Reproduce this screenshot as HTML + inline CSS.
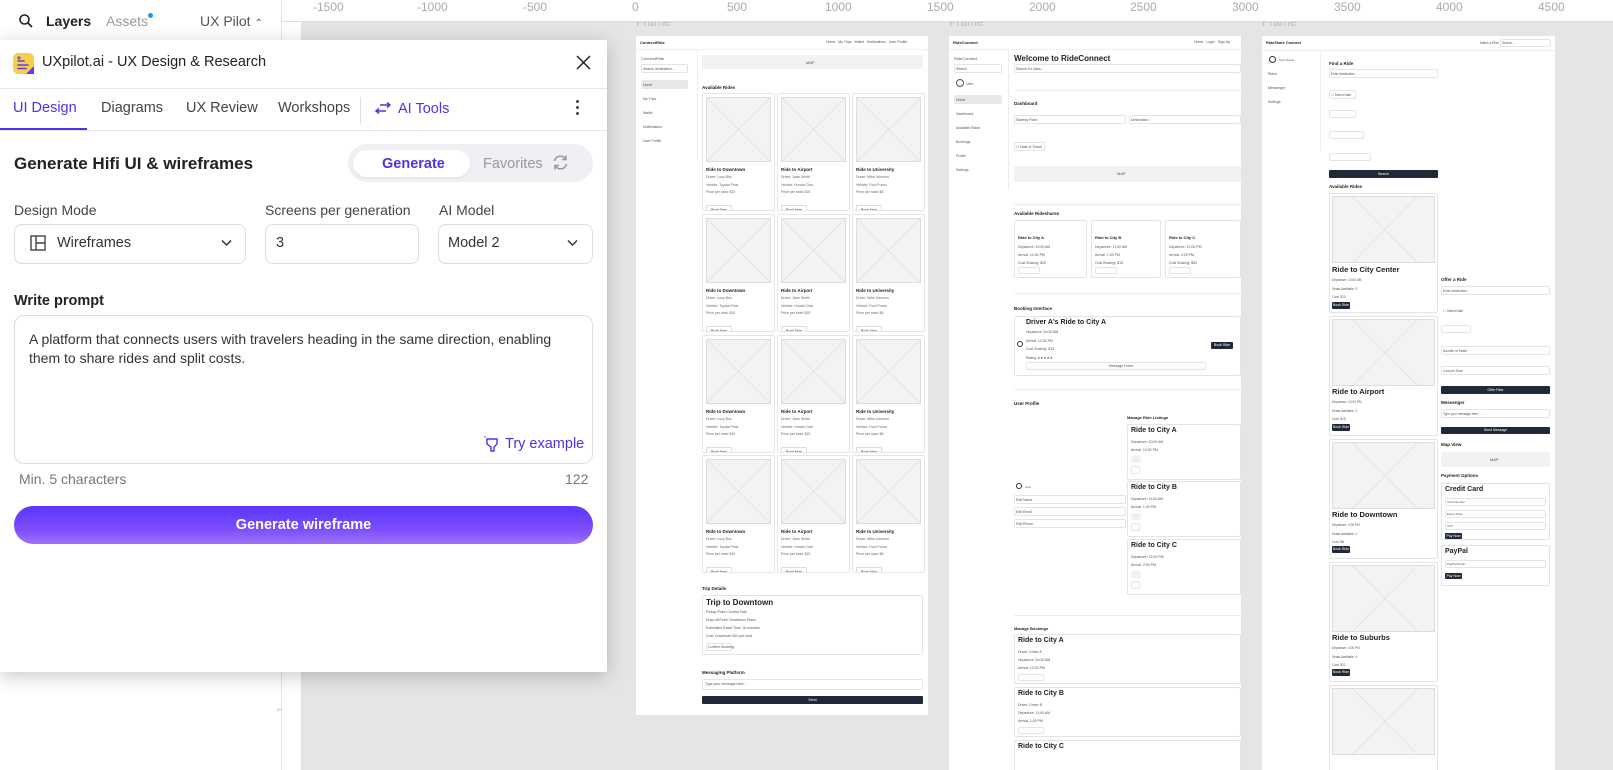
<!DOCTYPE html>
<html><head><meta charset="utf-8"><style>
*{box-sizing:border-box;margin:0;padding:0}
body{width:1613px;height:770px;overflow:hidden;position:relative;background:#e5e5e5;font-family:"Liberation Sans",sans-serif;color:#222}
.a{position:absolute}
.rl{position:absolute;top:0;font-size:12px;color:#aaa}
.fr{position:absolute;background:#fff;overflow:hidden}
.t{position:absolute;font-size:4px;color:#555;white-space:nowrap}
.h{position:absolute;font-size:5px;font-weight:bold;color:#222;white-space:nowrap}
.bx{position:absolute;border:1px solid #e4e4e4;border-radius:2px;background:#fff}
.gr{position:absolute;background:#f1f2f4;border-radius:2px}
.card{position:absolute;width:73px;height:118px;border:1px solid #e6e6e6;border-radius:2px;padding:3px;background:#fff;overflow:hidden}
.card svg{display:block;width:65px;height:65px;background:#f2f3f5;border:1px solid #ddd}
.card b{display:block;font-size:4.5px;margin:5px 0 3px;color:#222}
.card i{display:block;font-style:normal;font-size:3.5px;color:#666;margin-bottom:3.5px}
.card u{display:inline-block;text-decoration:none;font-size:3.5px;border:1px solid #ddd;padding:1.5px 4px;border-radius:1px}
.dk{position:absolute;background:#1f2937;color:#fff;font-size:3.5px;text-align:center;border-radius:1px}
.lab{font-size:14px;color:#444;position:absolute}
.inp{position:absolute;border:1px solid #ddd;border-radius:8px;height:40px;background:#fff}
.fl{position:absolute;top:15px;font-size:12px;color:#bbb}
</style></head><body>

<!-- frame labels (under ruler) -->
<div class="fl" style="left:636px">Frame</div>
<div class="fl" style="left:949px">Frame</div>
<div class="fl" style="left:1262px">Frame</div>

<!-- left sidebar top -->
<div class="a" style="left:0;top:0;width:282px;height:770px;background:#fff;border-right:1px solid #e5e5e5"></div>
<div class="a" style="left:282px;top:22px;width:20px;height:748px;background:#fff;border-right:1px solid #e0e0e0"></div>
<div class="a" style="left:282px;top:0;width:1331px;height:22px;background:#fff;border-bottom:1px solid #ddd"></div>
<div class="rl" style="left:313px">-1500</div><div class="rl" style="left:417px">-1000</div><div class="rl" style="left:523px">-500</div>
<div class="rl" style="left:632px">0</div><div class="rl" style="left:727px">500</div><div class="rl" style="left:825px">1000</div>
<div class="rl" style="left:927px">1500</div><div class="rl" style="left:1029px">2000</div><div class="rl" style="left:1130px">2500</div>
<div class="rl" style="left:1232px">3000</div><div class="rl" style="left:1334px">3500</div><div class="rl" style="left:1436px">4000</div><div class="rl" style="left:1538px">4500</div>
<div class="a" style="left:277px;top:705px;font-size:8px;color:#aaa">⌐</div>
<svg class="a" style="left:18px;top:13px" width="16" height="16" viewBox="0 0 16 16"><circle cx="6.5" cy="6.5" r="4.5" fill="none" stroke="#222" stroke-width="1.6"/><path d="M10 10l4 4" stroke="#222" stroke-width="1.6"/></svg>
<div class="a" style="left:46px;top:13px;font-size:14px;font-weight:bold;color:#222">Layers</div>
<div class="a" style="left:106px;top:13px;font-size:14px;color:#999">Assets</div>
<div class="a" style="left:148px;top:13px;width:5px;height:5px;border-radius:50%;background:#1e90ff"></div>
<div class="a" style="left:200px;top:13px;font-size:14px;color:#555">UX Pilot <span style="font-size:10px">⌃</span></div>

<!-- FRAME 1 -->
<div class="fr" style="left:636px;top:36px;width:292px;height:679px">
 <div class="h" style="left:4px;top:4px;font-size:4px">ConnectRide</div>
 <div class="t" style="left:190px;top:4px;font-size:3.5px">Home &nbsp; My Trips &nbsp; Wallet &nbsp; Notifications &nbsp; User Profile</div>
 <div class="a" style="left:0;top:13px;width:292px;border-top:1px solid #eee"></div>
 <div class="a" style="left:61px;top:14px;height:110px;border-left:1px solid #eee"></div>
 <div class="t" style="left:5px;top:20px">ConnectRide</div>
 <div class="bx" style="left:5px;top:28px;width:47px;height:9px"></div><div class="t" style="left:7px;top:31px;font-size:3.5px">Search destination...</div>
 <div class="gr" style="left:5px;top:44px;width:47px;height:9px;background:#e8e8ea"></div><div class="t" style="left:7px;top:47px;font-size:3.5px">Home</div>
 <div class="t" style="left:7px;top:61px;font-size:3.5px">My Trips</div><div class="t" style="left:7px;top:75px;font-size:3.5px">Wallet</div>
 <div class="t" style="left:7px;top:89px;font-size:3.5px">Notifications</div><div class="t" style="left:7px;top:103px;font-size:3.5px">User Profile</div>
 <div class="gr" style="left:66px;top:19px;width:221px;height:14px"></div><div class="t" style="left:170px;top:24px">MAP</div>
 <div class="h" style="left:66px;top:49px;font-size:4.5px">Available Rides</div>
</div>
<div class="card" style="left:702px;top:93px"><svg viewBox="0 0 65 65"><path d="M0 0L65 65M65 0L0 65" stroke="#ccc" stroke-width=".5"/></svg><b>Ride to Downtown</b><i>Driver: Lucy Bux</i><i>Vehicle: Toyota Prius</i><i>Price per seat: $10</i><u>Book Now</u></div>
<div class="card" style="left:777px;top:93px"><svg viewBox="0 0 65 65"><path d="M0 0L65 65M65 0L0 65" stroke="#ccc" stroke-width=".5"/></svg><b>Ride to Airport</b><i>Driver: Jane Smith</i><i>Vehicle: Honda Civic</i><i>Price per seat: $15</i><u>Book Now</u></div>
<div class="card" style="left:852px;top:93px"><svg viewBox="0 0 65 65"><path d="M0 0L65 65M65 0L0 65" stroke="#ccc" stroke-width=".5"/></svg><b>Ride to University</b><i>Driver: Mike Johnson</i><i>Vehicle: Ford Focus</i><i>Price per seat: $8</i><u>Book Now</u></div>
<div class="card" style="left:702px;top:214px"><svg viewBox="0 0 65 65"><path d="M0 0L65 65M65 0L0 65" stroke="#ccc" stroke-width=".5"/></svg><b>Ride to Downtown</b><i>Driver: Lucy Bux</i><i>Vehicle: Toyota Prius</i><i>Price per seat: $10</i><u>Book Now</u></div>
<div class="card" style="left:777px;top:214px"><svg viewBox="0 0 65 65"><path d="M0 0L65 65M65 0L0 65" stroke="#ccc" stroke-width=".5"/></svg><b>Ride to Airport</b><i>Driver: Jane Smith</i><i>Vehicle: Honda Civic</i><i>Price per seat: $15</i><u>Book Now</u></div>
<div class="card" style="left:852px;top:214px"><svg viewBox="0 0 65 65"><path d="M0 0L65 65M65 0L0 65" stroke="#ccc" stroke-width=".5"/></svg><b>Ride to University</b><i>Driver: Mike Johnson</i><i>Vehicle: Ford Focus</i><i>Price per seat: $8</i><u>Book Now</u></div>
<div class="card" style="left:702px;top:335px"><svg viewBox="0 0 65 65"><path d="M0 0L65 65M65 0L0 65" stroke="#ccc" stroke-width=".5"/></svg><b>Ride to Downtown</b><i>Driver: Lucy Bux</i><i>Vehicle: Toyota Prius</i><i>Price per seat: $10</i><u>Book Now</u></div>
<div class="card" style="left:777px;top:335px"><svg viewBox="0 0 65 65"><path d="M0 0L65 65M65 0L0 65" stroke="#ccc" stroke-width=".5"/></svg><b>Ride to Airport</b><i>Driver: Jane Smith</i><i>Vehicle: Honda Civic</i><i>Price per seat: $15</i><u>Book Now</u></div>
<div class="card" style="left:852px;top:335px"><svg viewBox="0 0 65 65"><path d="M0 0L65 65M65 0L0 65" stroke="#ccc" stroke-width=".5"/></svg><b>Ride to University</b><i>Driver: Mike Johnson</i><i>Vehicle: Ford Focus</i><i>Price per seat: $8</i><u>Book Now</u></div>
<div class="card" style="left:702px;top:455px"><svg viewBox="0 0 65 65"><path d="M0 0L65 65M65 0L0 65" stroke="#ccc" stroke-width=".5"/></svg><b>Ride to Downtown</b><i>Driver: Lucy Bux</i><i>Vehicle: Toyota Prius</i><i>Price per seat: $10</i><u>Book Now</u></div>
<div class="card" style="left:777px;top:455px"><svg viewBox="0 0 65 65"><path d="M0 0L65 65M65 0L0 65" stroke="#ccc" stroke-width=".5"/></svg><b>Ride to Airport</b><i>Driver: Jane Smith</i><i>Vehicle: Honda Civic</i><i>Price per seat: $15</i><u>Book Now</u></div>
<div class="card" style="left:852px;top:455px"><svg viewBox="0 0 65 65"><path d="M0 0L65 65M65 0L0 65" stroke="#ccc" stroke-width=".5"/></svg><b>Ride to University</b><i>Driver: Mike Johnson</i><i>Vehicle: Ford Focus</i><i>Price per seat: $8</i><u>Book Now</u></div>
<div class="h" style="left:702px;top:586px;font-size:4.5px">Trip Details</div>
<div class="bx" style="left:702px;top:595px;width:221px;height:60px"></div>
<div class="h" style="left:706px;top:598px;font-size:8px">Trip to Downtown</div>
<div class="t" style="left:706px;top:610px;font-size:3.5px">Pickup Point: Central Park</div>
<div class="t" style="left:706px;top:618px;font-size:3.5px">Drop-off Point: Downtown Plaza</div>
<div class="t" style="left:706px;top:626px;font-size:3.5px">Estimated Travel Time: 30 minutes</div>
<div class="t" style="left:706px;top:634px;font-size:3.5px">Cost: Downtown $10 per seat</div>
<div class="bx" style="left:706px;top:643px;width:26px;height:8px"></div><div class="t" style="left:708px;top:645px;font-size:3.5px">Confirm Booking</div>
<div class="h" style="left:702px;top:670px;font-size:4.5px">Messaging Platform</div>
<div class="bx" style="left:702px;top:679px;width:221px;height:11px"></div><div class="t" style="left:705px;top:682px;font-size:3.5px">Type your message here...</div>
<div class="dk" style="left:702px;top:696px;width:221px;height:8px;line-height:8px">Send</div>

<!-- FRAME 2 -->
<div class="fr" style="left:949px;top:36px;width:292px;height:734px">
 <div class="h" style="left:4px;top:4px;font-size:4px">RideConnect</div>
 <div class="t" style="left:245px;top:4px;font-size:3.5px">Home &nbsp; Login &nbsp; Sign Up</div>
 <div class="a" style="left:0;top:13px;width:292px;border-top:1px solid #eee"></div>
 <div class="a" style="left:59px;top:14px;height:140px;border-left:1px solid #eee"></div>
 <div class="t" style="left:5px;top:20px">RideConnect</div>
 <div class="bx" style="left:5px;top:28px;width:48px;height:9px"></div><div class="t" style="left:7px;top:31px;font-size:3.5px">Search</div>
 <div class="a" style="left:7px;top:43px;width:8px;height:8px;border:1px solid #555;border-radius:50%"></div><div class="t" style="left:17px;top:46px;font-size:3.5px">User</div>
 <div class="gr" style="left:5px;top:59px;width:48px;height:9px;background:#e8e8ea"></div><div class="t" style="left:7px;top:62px;font-size:3.5px">Home</div>
 <div class="t" style="left:7px;top:76px;font-size:3.5px">Dashboard</div><div class="t" style="left:7px;top:90px;font-size:3.5px">Available Rides</div>
 <div class="t" style="left:7px;top:104px;font-size:3.5px">Bookings</div><div class="t" style="left:7px;top:118px;font-size:3.5px">Profile</div><div class="t" style="left:7px;top:132px;font-size:3.5px">Settings</div>
 <div class="h" style="left:65px;top:18px;font-size:8px">Welcome to RideConnect</div>
 <div class="bx" style="left:65px;top:28px;width:227px;height:9px"></div><div class="t" style="left:67px;top:31px;font-size:3.5px">Search for rides...</div>
 <div class="a" style="left:65px;top:54px;width:227px;border-top:1px solid #eee"></div>
 <div class="h" style="left:65px;top:65px;font-size:4.5px">Dashboard</div>
 <div class="bx" style="left:65px;top:79px;width:112px;height:9px"></div><div class="t" style="left:67px;top:82px;font-size:3.5px">Starting Point</div>
 <div class="bx" style="left:180px;top:79px;width:112px;height:9px"></div><div class="t" style="left:182px;top:82px;font-size:3.5px">Destination</div>
 <div class="bx" style="left:65px;top:106px;width:31px;height:9px"></div><div class="t" style="left:67px;top:109px;font-size:3.5px">☐ Date of Travel</div>
 <div class="gr" style="left:65px;top:130px;width:227px;height:16px"></div><div class="t" style="left:168px;top:135px">MAP</div>
 <div class="a" style="left:65px;top:168px;width:227px;border-top:1px solid #eee"></div>
 <div class="h" style="left:65px;top:175px;font-size:4.5px">Available Rideshares</div>
 <div class="bx" style="left:65px;top:184px;width:73px;height:58px"></div><div class="bx" style="left:142px;top:184px;width:70px;height:58px"></div><div class="bx" style="left:216px;top:184px;width:76px;height:58px"></div>
 <div class="h" style="left:69px;top:199px;font-size:4px">Ride to City A</div><div class="h" style="left:146px;top:199px;font-size:4px">Ride to City B</div><div class="h" style="left:220px;top:199px;font-size:4px">Ride to City C</div>
 <div class="t" style="left:69px;top:207px;font-size:3.5px;line-height:8px">Departure: 10:00 AM<br>Arrival: 12:00 PM<br>Cost Sharing: $20</div>
 <div class="t" style="left:146px;top:207px;font-size:3.5px;line-height:8px">Departure: 11:00 AM<br>Arrival: 1:00 PM<br>Cost Sharing: $15</div>
 <div class="t" style="left:220px;top:207px;font-size:3.5px;line-height:8px">Departure: 12:00 PM<br>Arrival: 2:00 PM<br>Cost Sharing: $30</div>
 <div class="bx" style="left:69px;top:231px;width:22px;height:7px"></div><div class="bx" style="left:146px;top:231px;width:22px;height:7px"></div><div class="bx" style="left:220px;top:231px;width:22px;height:7px"></div>
 <div class="a" style="left:65px;top:257px;width:227px;border-top:1px solid #eee"></div>
 <div class="h" style="left:65px;top:270px;font-size:4.5px">Booking Interface</div>
 <div class="bx" style="left:65px;top:280px;width:227px;height:60px"></div>
 <div class="h" style="left:77px;top:283px;font-size:7px">Driver A's Ride to City A</div>
 <div class="t" style="left:77px;top:292px;font-size:3.5px;line-height:8.5px">Departure: 10:00 AM<br>Arrival: 12:00 PM<br>Cost Sharing: $15<br>Rating ★★★★★</div>
 <div class="a" style="left:68px;top:305px;width:6px;height:6px;border:1px solid #333;border-radius:50%"></div>
 <div class="bx" style="left:77px;top:326px;width:180px;height:8px"></div><div class="t" style="left:160px;top:328px;font-size:3.5px">Message Driver</div>
 <div class="dk" style="left:262px;top:306px;width:22px;height:7px;line-height:7px">Book Ride</div>
 <div class="a" style="left:65px;top:353px;width:227px;border-top:1px solid #eee"></div>
 <div class="h" style="left:65px;top:365px;font-size:4.5px">User Profile</div>
 <div class="h" style="left:178px;top:379px;font-size:4px">Manage Ride Listings</div>
 <div class="bx" style="left:178px;top:388px;width:114px;height:56px"></div><div class="h" style="left:182px;top:391px;font-size:7px">Ride to City A</div>
 <div class="bx" style="left:178px;top:445px;width:114px;height:56px"></div><div class="h" style="left:182px;top:448px;font-size:7px">Ride to City B</div>
 <div class="bx" style="left:178px;top:503px;width:114px;height:56px"></div><div class="h" style="left:182px;top:506px;font-size:7px">Ride to City C</div>
 <div class="t" style="left:182px;top:402px;font-size:3.5px;line-height:8px">Departure: 10:00 AM<br>Arrival: 12:00 PM</div>
 <div class="t" style="left:182px;top:459px;font-size:3.5px;line-height:8px">Departure: 11:00 AM<br>Arrival: 1:00 PM</div>
 <div class="t" style="left:182px;top:517px;font-size:3.5px;line-height:8px">Departure: 12:00 PM<br>Arrival: 2:00 PM</div>
 <div class="gr" style="left:182px;top:420px;width:10px;height:7px"></div><div class="bx" style="left:182px;top:430px;width:9px;height:8px"></div>
 <div class="gr" style="left:182px;top:477px;width:10px;height:7px"></div><div class="bx" style="left:182px;top:487px;width:9px;height:8px"></div>
 <div class="gr" style="left:182px;top:535px;width:10px;height:7px"></div><div class="bx" style="left:182px;top:545px;width:9px;height:8px"></div>
 <div class="a" style="left:67px;top:447px;width:6px;height:6px;border:1px solid #333;border-radius:50%"></div><div class="t" style="left:76px;top:449px;font-size:3px">User</div>
 <div class="bx" style="left:65px;top:459px;width:112px;height:9px"></div><div class="t" style="left:67px;top:462px;font-size:3.5px">Edit Name</div>
 <div class="bx" style="left:65px;top:471px;width:112px;height:9px"></div><div class="t" style="left:67px;top:474px;font-size:3.5px">Edit Email</div>
 <div class="bx" style="left:65px;top:483px;width:112px;height:9px"></div><div class="t" style="left:67px;top:486px;font-size:3.5px">Edit Phone</div>
 <div class="a" style="left:65px;top:579px;width:227px;border-top:1px solid #eee"></div>
 <div class="h" style="left:65px;top:590px;font-size:4px">Manage Bookings</div>
 <div class="bx" style="left:65px;top:598px;width:227px;height:50px"></div><div class="h" style="left:69px;top:601px;font-size:7px">Ride to City A</div>
 <div class="t" style="left:69px;top:612px;font-size:3.5px;line-height:8px">Driver: Driver A<br>Departure: 10:00 AM<br>Arrival: 12:00 PM</div>
 <div class="bx" style="left:69px;top:638px;width:26px;height:7px"></div>
 <div class="bx" style="left:65px;top:651px;width:227px;height:50px"></div><div class="h" style="left:69px;top:654px;font-size:7px">Ride to City B</div>
 <div class="t" style="left:69px;top:665px;font-size:3.5px;line-height:8px">Driver: Driver B<br>Departure: 11:00 AM<br>Arrival: 1:00 PM</div>
 <div class="bx" style="left:69px;top:691px;width:26px;height:7px"></div>
 <div class="bx" style="left:65px;top:704px;width:227px;height:50px"></div><div class="h" style="left:69px;top:707px;font-size:7px">Ride to City C</div>
</div>

<!-- FRAME 3 -->
<div class="fr" style="left:1262px;top:36px;width:293px;height:734px">
 <div class="h" style="left:4px;top:5px;font-size:3.8px">RideShare Connect</div>
 <div class="t" style="left:218px;top:5px;font-size:3.2px">Match a Ride</div>
 <div class="bx" style="left:238px;top:3px;width:51px;height:8px"></div><div class="t" style="left:240px;top:5px;font-size:3.2px">Search...</div>
 <div class="a" style="left:0;top:14px;width:293px;border-top:1px solid #eee"></div>
 <div class="a" style="left:58px;top:15px;height:100px;border-left:1px solid #eee"></div>
 <div class="a" style="left:7px;top:20px;width:7px;height:7px;border:1px solid #333;border-radius:50%"></div><div class="t" style="left:17px;top:22px;font-size:3px">User Name</div>
 <div class="t" style="left:6px;top:36px;font-size:3.5px">Rides</div><div class="t" style="left:6px;top:50px;font-size:3.5px">Messenger</div><div class="t" style="left:6px;top:64px;font-size:3.5px">Settings</div>
 <div class="h" style="left:67px;top:25px;font-size:4.5px">Find a Ride</div>
 <div class="bx" style="left:67px;top:33px;width:109px;height:9px"></div><div class="t" style="left:69px;top:36px;font-size:3.2px">Enter destination</div>
 <div class="bx" style="left:67px;top:54px;width:27px;height:9px"></div><div class="t" style="left:69px;top:57px;font-size:3.2px">☐ Select Date</div>
 <div class="bx" style="left:67px;top:74px;width:27px;height:8px"></div><div class="bx" style="left:67px;top:95px;width:35px;height:8px"></div><div class="bx" style="left:67px;top:117px;width:42px;height:8px"></div>
 <div class="dk" style="left:67px;top:134px;width:109px;height:8px;line-height:8px">Search</div>
 <div class="h" style="left:67px;top:148px;font-size:4.5px">Available Rides</div>
 <div class="bx" style="left:67px;top:157px;width:109px;height:120px"></div>
 <svg class="a" style="left:70px;top:160px" width="103" height="67" viewBox="0 0 103 67"><rect x=".5" y=".5" width="102" height="66" fill="#f2f3f5" stroke="#ddd"/><path d="M20 0L86 67M86 0L20 67" stroke="#ccc" stroke-width=".5"/></svg>
 <div class="h" style="left:70px;top:229px;font-size:7.5px">Ride to City Center</div>
 <div class="t" style="left:70px;top:240px;font-size:3.2px;line-height:8.5px">Departure: 10:00 AM<br>Seats Available: 3<br>Cost: $10</div>
 <div class="dk" style="left:70px;top:266px;width:18px;height:7px;line-height:7px">Book Ride</div>
 <div class="bx" style="left:67px;top:280px;width:109px;height:120px"></div>
 <svg class="a" style="left:70px;top:283px" width="103" height="67" viewBox="0 0 103 67"><rect x=".5" y=".5" width="102" height="66" fill="#f2f3f5" stroke="#ddd"/><path d="M20 0L86 67M86 0L20 67" stroke="#ccc" stroke-width=".5"/></svg>
 <div class="h" style="left:70px;top:351px;font-size:7.5px">Ride to Airport</div>
 <div class="t" style="left:70px;top:362px;font-size:3.2px;line-height:8.5px">Departure: 12:00 PM<br>Seats Available: 2<br>Cost: $15</div>
 <div class="dk" style="left:70px;top:388px;width:18px;height:7px;line-height:7px">Book Ride</div>
 <div class="bx" style="left:67px;top:403px;width:109px;height:120px"></div>
 <svg class="a" style="left:70px;top:406px" width="103" height="67" viewBox="0 0 103 67"><rect x=".5" y=".5" width="102" height="66" fill="#f2f3f5" stroke="#ddd"/><path d="M20 0L86 67M86 0L20 67" stroke="#ccc" stroke-width=".5"/></svg>
 <div class="h" style="left:70px;top:474px;font-size:7.5px">Ride to Downtown</div>
 <div class="t" style="left:70px;top:485px;font-size:3.2px;line-height:8.5px">Departure: 2:00 PM<br>Seats Available: 1<br>Cost: $8</div>
 <div class="dk" style="left:70px;top:510px;width:18px;height:7px;line-height:7px">Book Ride</div>
 <div class="bx" style="left:67px;top:526px;width:109px;height:120px"></div>
 <svg class="a" style="left:70px;top:529px" width="103" height="67" viewBox="0 0 103 67"><rect x=".5" y=".5" width="102" height="66" fill="#f2f3f5" stroke="#ddd"/><path d="M20 0L86 67M86 0L20 67" stroke="#ccc" stroke-width=".5"/></svg>
 <div class="h" style="left:70px;top:597px;font-size:7.5px">Ride to Suburbs</div>
 <div class="t" style="left:70px;top:608px;font-size:3.2px;line-height:8.5px">Departure: 4:00 PM<br>Seats Available: 4<br>Cost: $12</div>
 <div class="dk" style="left:70px;top:633px;width:18px;height:7px;line-height:7px">Book Ride</div>
 <div class="bx" style="left:67px;top:649px;width:109px;height:120px"></div>
 <svg class="a" style="left:70px;top:652px" width="103" height="67" viewBox="0 0 103 67"><rect x=".5" y=".5" width="102" height="66" fill="#f2f3f5" stroke="#ddd"/><path d="M20 0L86 67M86 0L20 67" stroke="#ccc" stroke-width=".5"/></svg>
 <div class="h" style="left:179px;top:241px;font-size:4.5px">Offer a Ride</div>
 <div class="bx" style="left:179px;top:250px;width:109px;height:9px"></div><div class="t" style="left:181px;top:253px;font-size:3.2px">Enter destination</div>
 <div class="t" style="left:181px;top:273px;font-size:3.2px">☐ Select Date</div>
 <div class="bx" style="left:179px;top:289px;width:30px;height:8px"></div>
 <div class="bx" style="left:179px;top:310px;width:109px;height:9px"></div><div class="t" style="left:181px;top:313px;font-size:3.2px">Number of Seats</div>
 <div class="bx" style="left:179px;top:330px;width:109px;height:9px"></div><div class="t" style="left:181px;top:333px;font-size:3.2px">Cost per Seat</div>
 <div class="dk" style="left:179px;top:350px;width:109px;height:8px;line-height:8px">Offer Ride</div>
 <div class="h" style="left:179px;top:364px;font-size:4.5px">Messenger</div>
 <div class="bx" style="left:179px;top:373px;width:109px;height:9px"></div><div class="t" style="left:181px;top:376px;font-size:3.2px">Type your message here...</div>
 <div class="dk" style="left:179px;top:391px;width:109px;height:7px;line-height:7px">Send Message</div>
 <div class="h" style="left:179px;top:406px;font-size:4.5px">Map View</div>
 <div class="gr" style="left:179px;top:416px;width:109px;height:15px"></div><div class="t" style="left:228px;top:421px">MAP</div>
 <div class="h" style="left:179px;top:437px;font-size:4.5px">Payment Options</div>
 <div class="bx" style="left:179px;top:447px;width:109px;height:57px"></div><div class="h" style="left:183px;top:450px;font-size:7px">Credit Card</div>
 <div class="bx" style="left:183px;top:462px;width:101px;height:8px"></div><div class="bx" style="left:183px;top:474px;width:101px;height:8px"></div><div class="bx" style="left:183px;top:486px;width:101px;height:8px"></div>
 <div class="t" style="left:185px;top:464px;font-size:3px">Card Number</div><div class="t" style="left:185px;top:476px;font-size:3px">Expiry Date</div><div class="t" style="left:185px;top:488px;font-size:3px">CVV</div>
 <div class="dk" style="left:183px;top:497px;width:17px;height:6px;line-height:6px">Pay Now</div>
 <div class="bx" style="left:179px;top:509px;width:109px;height:41px"></div><div class="h" style="left:183px;top:512px;font-size:7px">PayPal</div>
 <div class="bx" style="left:183px;top:524px;width:101px;height:8px"></div><div class="t" style="left:185px;top:526px;font-size:3px">PayPal Email</div>
 <div class="dk" style="left:183px;top:537px;width:17px;height:6px;line-height:6px">Pay Now</div>
</div>

<!-- PLUGIN PANEL -->
<div class="a" style="left:0;top:40px;width:607px;height:632px;background:#fff;box-shadow:0 4px 18px rgba(0,0,0,.22)">
 <div class="a" style="left:13px;top:13px;width:21px;height:21px;border-radius:5px;background:#f9cf4a"></div>
 <svg class="a" style="left:13px;top:13px" width="21" height="21" viewBox="0 0 21 21"><path d="M5 8h6M5 12h10M5 15.5h8" stroke="#5b3cf0" stroke-width="1.6" stroke-linecap="round"/><path d="M6 3v4M4 5h4" stroke="#5b3cf0" stroke-width="1"/><path d="M21 13v8h-8z" fill="#5b3cf0"/></svg>
 <div class="a" style="left:42px;top:14px;font-size:14.5px;color:#222">UXpilot.ai - UX Design &amp; Research</div>
 <svg class="a" style="left:576px;top:15px" width="15" height="15" viewBox="0 0 15 15"><path d="M1 1l13 13M14 1L1 14" stroke="#222" stroke-width="1.5"/></svg>
 <div class="a" style="left:0;top:48px;width:607px;border-top:1px solid #e5e5e5"></div>
 <div class="a" style="left:13px;top:60px;font-size:14.5px;color:#4c33e8">UI Design</div>
 <div class="a" style="left:0;top:88px;width:87px;height:2px;background:#4c33e8"></div>
 <div class="a" style="left:101px;top:60px;font-size:14.5px;color:#444">Diagrams</div>
 <div class="a" style="left:186px;top:60px;font-size:14.5px;color:#444">UX Review</div>
 <div class="a" style="left:278px;top:60px;font-size:14.5px;color:#444">Workshops</div>
 <div class="a" style="left:360px;top:57px;height:27px;border-left:1px solid #ddd"></div>
 <svg class="a" style="left:375px;top:62px" width="16" height="12" viewBox="0 0 16 12"><path d="M5 3h10M12 0.5L15 3 12 5.5M11 9H1M4 6.5L1 9 4 11.5" fill="none" stroke="#4c33e8" stroke-width="1.5"/></svg>
 <div class="a" style="left:398px;top:61px;font-size:14.5px;color:#4c33e8">AI Tools</div>
 <div class="a" style="left:576px;top:60px;width:3px;height:3px;border-radius:50%;background:#444;box-shadow:0 6px 0 #444,0 12px 0 #444"></div>
 <div class="a" style="left:0;top:90px;width:607px;border-top:1px solid #e5e5e5"></div>
 <div class="a" style="left:14px;top:114px;font-size:17px;font-weight:bold;color:#222">Generate Hifi UI &amp; wireframes</div>
 <div class="a" style="left:348px;top:104px;width:245px;height:38px;border-radius:19px;background:#f0f0f4"></div>
 <div class="a" style="left:353px;top:110px;width:117px;height:27px;border-radius:14px;background:#fff;box-shadow:0 1px 2px rgba(0,0,0,.08)"></div>
 <div class="a" style="left:382px;top:116px;font-size:14.5px;font-weight:bold;color:#4c33e8">Generate</div>
 <div class="a" style="left:483px;top:116px;font-size:14.5px;color:#999">Favorites</div>
 <svg class="a" style="left:552px;top:114px" width="17" height="17" viewBox="0 0 17 17"><path d="M2.5 7A6 6 0 0 1 13.5 5M14.5 10A6 6 0 0 1 3.5 12" fill="none" stroke="#999" stroke-width="1.6"/><path d="M14 1.5v4h-4M3 15.5v-4h4" fill="none" stroke="#999" stroke-width="1.6"/></svg>
 <div class="lab" style="left:14px;top:162px">Design Mode</div>
 <div class="lab" style="left:265px;top:162px">Screens per generation</div>
 <div class="lab" style="left:439px;top:162px">AI Model</div>
 <div class="inp" style="left:14px;top:184px;width:232px"></div>
 <svg class="a" style="left:30px;top:195px" width="16" height="16" viewBox="0 0 16 16"><rect x="1" y="1" width="14" height="14" fill="none" stroke="#444" stroke-width="1.4"/><path d="M6 1v14M6 8h9" stroke="#444" stroke-width="1.4"/></svg>
 <div class="a" style="left:57px;top:195px;font-size:14.5px;color:#333">Wireframes</div>
 <svg class="a" style="left:221px;top:199px" width="11" height="8" viewBox="0 0 11 8"><path d="M1 1.5l4.5 4.5 4.5-4.5" fill="none" stroke="#333" stroke-width="1.5"/></svg>
 <div class="inp" style="left:265px;top:184px;width:154px"></div>
 <div class="a" style="left:276px;top:195px;font-size:14.5px;color:#333">3</div>
 <div class="inp" style="left:438px;top:184px;width:155px"></div>
 <div class="a" style="left:448px;top:195px;font-size:14.5px;color:#333">Model 2</div>
 <svg class="a" style="left:567px;top:199px" width="11" height="8" viewBox="0 0 11 8"><path d="M1 1.5l4.5 4.5 4.5-4.5" fill="none" stroke="#333" stroke-width="1.5"/></svg>
 <div class="a" style="left:14px;top:253px;font-size:14.5px;font-weight:bold;color:#222">Write prompt</div>
 <div class="a" style="left:14px;top:275px;width:579px;height:149px;border:1px solid #ddd;border-radius:10px"></div>
 <div class="a" style="left:29px;top:290px;font-size:14px;line-height:19px;color:#333;width:540px">A platform that connects users with travelers heading in the same direction, enabling them to share rides and split costs.</div>
 <svg class="a" style="left:484px;top:395px" width="16" height="18" viewBox="0 0 16 18"><path d="M3 4h10v5l-3 3v4H7v-4L3 9z" fill="none" stroke="#4c33e8" stroke-width="1.4"/><path d="M1 1v1.5" stroke="#4c33e8"/></svg>
 <div class="a" style="left:505px;top:396px;font-size:14.5px;color:#4c33e8">Try example</div>
 <div class="a" style="left:19px;top:431px;font-size:14px;color:#777">Min. 5 characters</div>
 <div class="a" style="left:565px;top:431px;font-size:14px;color:#777">122</div>
 <div class="a" style="left:14px;top:466px;width:579px;height:38px;border-radius:19px;background:linear-gradient(180deg,#5b35fb 0%,#7a4cfb 60%,#a073fb 100%);color:#fff;font-size:14.5px;font-weight:bold;text-align:center;line-height:38px">Generate wireframe</div>
</div>
</body></html>
